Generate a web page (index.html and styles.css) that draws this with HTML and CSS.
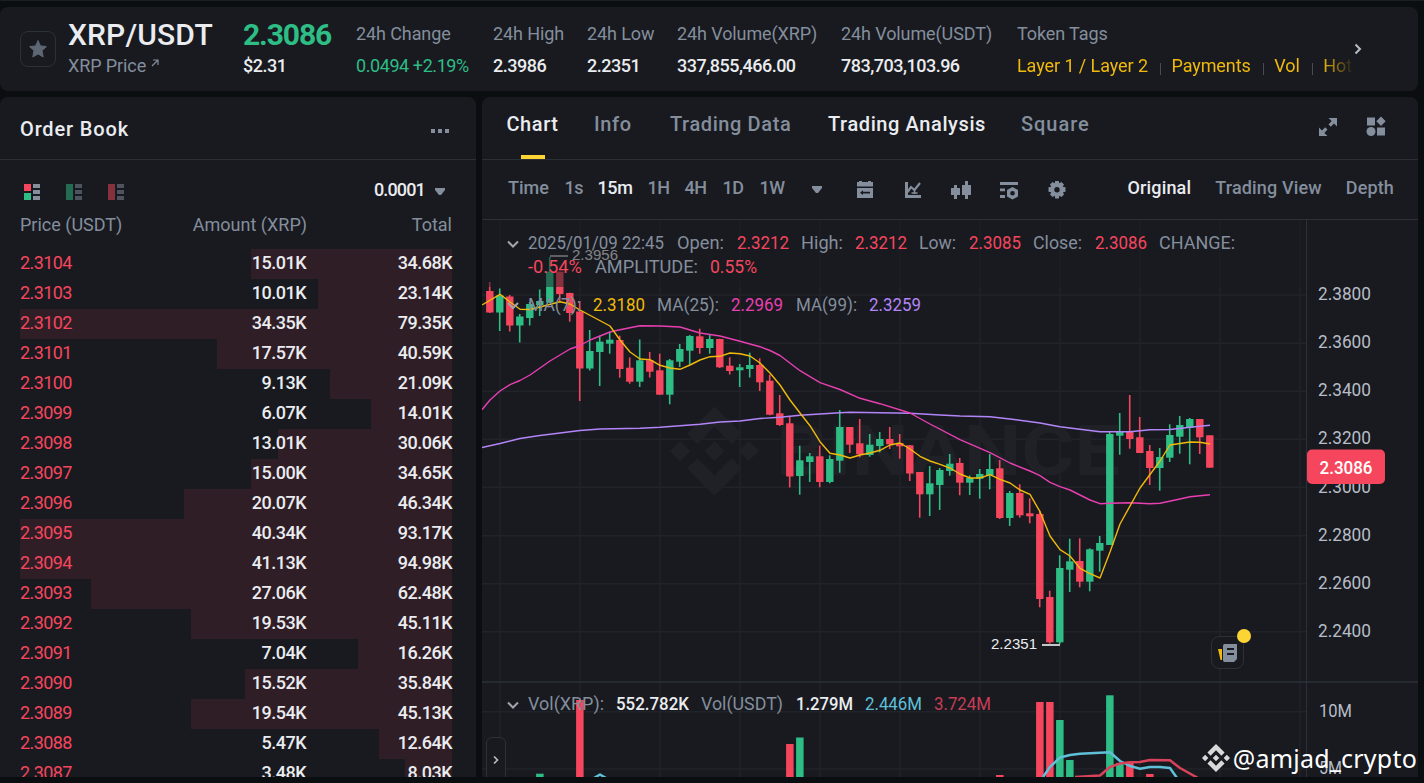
FILE: index.html
```html
<!DOCTYPE html>
<html lang="en">
<head>
  <meta charset="UTF-8" />
  <meta name="viewport" content="width=device-width, initial-scale=1.0"/>
  <title>2.3086 | XRPUSDT | Spot</title>
  <link rel="stylesheet" href="styles.css">
</head>
<body>

  <header class="ticker">
    <button class="fav">
      <svg width="20" height="20" viewBox="0 0 20 20"><path d="M10 1.5l2.4 5.4 6 .7-4.4 4 1.2 6.4-5.2-3.1L4.800 18 6 11.600 1.600 7.600l6-.7z" fill="#5e6673" stroke="#5e6673" stroke-linejoin="round"/></svg>
    </button>
    <div class="pair">
      <h1>XRP/USDT</h1>
      <a class="muted pair-link">XRP Price<svg width="8" height="8" viewBox="0 0 8 8"><path d="M1 7l6-6M2 1h5v5" fill="none" stroke="#848e9c" stroke-width="1.200"/></svg></a>
    </div>
    <div class="last">
      <div class="last-price">2.3086</div>
      <div class="value">$2.31</div>
    </div>
    <div class="stat stat-change"><div class="muted">24h Change</div><div class="value up">0.0494 +2.19%</div></div>
    <div class="stat stat-high"><div class="muted">24h High</div><div class="value">2.3986</div></div>
    <div class="stat stat-low"><div class="muted">24h Low</div><div class="value">2.2351</div></div>
    <div class="stat stat-base"><div class="muted">24h Volume(XRP)</div><div class="value">337,855,466.00</div></div>
    <div class="stat stat-quote"><div class="muted">24h Volume(USDT)</div><div class="value">783,703,103.96</div></div>
    <div class="stat stat-tags">
      <div class="muted">Token Tags</div>
      <div class="tags"><span>Layer 1 / Layer 2</span><span>Payments</span><span>Vol</span><span>Hot</span></div>
    </div>
    <svg class="more" width="8" height="12" viewBox="0 0 8 12"><path d="M1.500 1.500L6 6l-4.500 4.500" fill="none" stroke="#b7bdc6" stroke-width="2"/></svg>
  </header>

  <main>
    <section class="panel book">
      <div class="book-head">
        <h2>Order Book</h2>
        <div class="dots"><i></i><i></i><i></i></div>
      </div>
      <div class="book-tools">
        <svg width="16" height="16" viewBox="0 0 16 16"><path d="M0 0h7v7H0z" fill="#f6465d"/><path d="M0 9h7v7H0z" fill="#2ebd85"/><path d="M9 0h7v4H9zM9 6h7v4H9zM9 12h7v4H9z" fill="#848e9c"/></svg>
        <svg class="off" width="16" height="16" viewBox="0 0 16 16"><path d="M0 0h7v16H0z" fill="#2ebd85"/><path d="M9 0h7v4H9zM9 6h7v4H9zM9 12h7v4H9z" fill="#848e9c"/></svg>
        <svg class="off" width="16" height="16" viewBox="0 0 16 16"><path d="M0 0h7v16H0z" fill="#f6465d"/><path d="M9 0h7v4H9zM9 6h7v4H9zM9 12h7v4H9z" fill="#848e9c"/></svg>
        <div class="precision">0.0001</div>
        <svg class="caret" width="10" height="7" viewBox="0 0 10 7"><path d="M0 0h10v2L6 7H4L0 2z" fill="#848e9c"/></svg>
      </div>
      <div class="book-cols muted"><span>Price (USDT)</span><span>Amount (XRP)</span><span>Total</span></div>
      <div class="asks" id="asks"></div>
    </section>

    <section class="panel chart">
      <nav class="tabs">
        <a class="active tab-chart">Chart</a>
        <a class="tab-info">Info</a>
        <a class="tab-data">Trading Data</a>
        <a class="lit tab-analysis">Trading Analysis</a>
        <a class="tab-square">Square</a>
        <div class="tab-icons">
          <svg width="20" height="20" viewBox="0 0 20 20" fill="#848e9c"><path d="M10.500 1H19v8.500l-3-3-3.200 3.200-2.300-2.300L13.700 4zM9.500 19H1v-8.500l3 3 3.200-3.200 2.300 2.300L6.300 16z"/></svg>
          <svg width="20" height="20" viewBox="0 0 20 20" fill="#848e9c"><path d="M1 1.500h8v8H1zM11 11.500h8v8h-8zM15 .500l4.700 4.700L15 10l-4.700-4.800z"/><circle cx="5" cy="15.500" r="4.500"/></svg>
        </div>
      </nav>

      <div class="toolbar">
        <div class="intervals">
          <a class="iv-time">Time</a><a class="iv-1s">1s</a><a class="active iv-15">15m</a><a class="iv-1h">1H</a><a class="iv-4h">4H</a><a class="iv-1d">1D</a><a>1W</a>
        </div>
        <svg class="caret" width="10" height="7" viewBox="0 0 10 7"><path d="M0 0h10v2L6 7H4L0 2z" fill="#848e9c"/></svg>
        <div class="tools">
          <svg width="20" height="20" viewBox="0 0 20 20" fill="#848e9c"><path d="M2 2h2V1h3v1h6V1h3v1h2v4.500H2zM2 8h16v10H2zm3 4.700L8 15v-1.500h7v-1.700H8v-1.500z" fill-rule="evenodd"/></svg>
          <svg width="20" height="20" viewBox="0 0 20 20" fill="none" stroke="#848e9c"><path d="M3.500 2v14.500H18" stroke-width="3"/><path d="M4.500 12L8 7l3.500 3L17 3" stroke-width="2.200"/><path d="M8.500 13h6M11.500 9.500V14" stroke-width="1.500"/></svg>
          <svg width="20" height="20" viewBox="0 0 20 20" fill="#848e9c"><path d="M0 8h3V5h3v3h3v7H6v4H3v-4H0zM11 5h3V1h3v4h3v10h-3v4h-3v-4h-3z"/></svg>
          <svg width="20" height="20" viewBox="0 0 20 20" fill="#848e9c"><path d="M1 2h18v3H1zM1 8.500h5v2.700H1zM1 15h5v3H1zM13.500 7L19 10v6.500L13.500 19.500 8 16.500V10zm0 4a2.300 2.300 0 100 4.600 2.300 2.300 0 000-4.600z" fill-rule="evenodd"/></svg>
          <svg width="20" height="20" viewBox="0 0 20 20"><path d="M8.200 1h3.600l.5 2.300L14.500 2l2.500 2.500-1.300 2.200 2.800.5v4.600l-2.500.5L17 14.500l-2.500 2.500-2.200-1.300-.5 2.800H8.200l-.5-2.800-2.200 1.300L3 14.500l1.300-2.200L1.500 11.800V7.200l2.800-.5L3 4.500 5.500 2l2.200 1.300z" fill="#848e9c"/><circle cx="10" cy="9.700" r="2.700" fill="#181a20"/></svg>
        </div>
        <div class="views">
          <a class="active view-original">Original</a><a class="view-tv">Trading View</a><a class="view-depth">Depth</a>
        </div>
      </div>

      <div class="plot">
        <svg id="plot" width="936" height="557" viewBox="482 220 936 557"></svg>
        <button class="news">
          <svg width="20" height="18" viewBox="0 0 20 18"><path d="M0 5h4v11H2.500z" fill="#f0b90b"/><path d="M6.500 0H19v15l-3 3H6.500q-1.500 0-1.500-2V2q0-2 1.500-2z" fill="#848e9c"/><path d="M9 5h7M9 10h7" stroke="#181a20" stroke-width="2"/></svg>
          <i class="badge"></i>
        </button>
        <button class="expand">
          <svg width="6" height="8" viewBox="0 0 6 8"><path d="M1 .5L4.500 4 1 7.500" fill="none" stroke="#b7bdc6" stroke-width="1.600"/></svg>
        </button>
      </div>
    </section>
  </main>

  <div class="signature">
    <svg width="28" height="28" viewBox="0 0 126.610 126.610" fill="#d9d9d9"><path d="M38.730 53.200 63.310 28.620 87.900 53.210l14.300-14.300L63.310 0 24.430 38.900zM0 63.310 14.300 49.010 28.600 63.310 14.300 77.610zM38.730 73.410 63.310 98l24.590-24.590 14.310 14.290L63.310 126.610 24.430 87.720zM98 63.310l14.300-14.300 14.300 14.300-14.300 14.300zM77.830 63.300 63.310 48.780 48.790 63.300 63.310 77.830z"/></svg>
    <span>@amjad_crypto</span>
  </div>

  <script src="app.js"></script>
</body>
</html>
```

FILE: styles.css
```css
* { box-sizing: border-box; }
body {
  margin: 0;
  height: 783px;
  overflow: hidden;
  background: #0b0e11;
  border-top: 1px solid #1b1e23;
  color: #eaecef;
  font-family: Roboto, "Liberation Sans", sans-serif;
  font-size: 18px;
}
h1, h2 { margin: 0; font-weight: 500; }
button { background: none; border: 1px solid #2b3139; padding: 0; }
svg { display: block; flex: none; }
.muted { color: #848e9c; }
.up { color: #2ebd85; }

/* ticker */
.ticker {
  width: 1418px;
  height: 84px;
  margin-top: 6px;
  padding: 11px 0 0 20px;
  display: flex;
  background: #181a20;
  border-radius: 8px;
  line-height: 32px;
  white-space: nowrap;
}
.ticker > * { flex: none; }
.fav {
  width: 36px;
  height: 36px;
  margin: 13px 12px 0 0;
  border-radius: 8px;
  display: flex;
  align-items: center;
  justify-content: center;
}
.pair { width: 175px; }
.pair h1 { height: 32px; padding-top: 1px; font-size: 30px; letter-spacing: .15px; }
.pair-link { display: flex; gap: 5px; letter-spacing: -.1px; }
.pair-link svg { margin-top: 9px; }
.last { width: 113px; }
.last-price { height: 32px; padding-top: 1px; color: #2ebd85; font-size: 30px; font-weight: 700; letter-spacing: -1.1px; }
.value { font-weight: 500; letter-spacing: -.5px; }
.value.up { font-weight: 400; letter-spacing: -.42px; }
.stat .muted { letter-spacing: -.1px; }
.stat-change { width: 137px; }
.stat-high { width: 94px; }
.stat-low { width: 90px; }
.stat-base { width: 164px; }
.stat-quote { width: 176px; }
.stat-tags { width: 335px; }
.tags {
  display: flex;
  overflow: hidden;
  color: #f0b90b;
  letter-spacing: -.08px;
  -webkit-mask-image: linear-gradient(to right, #000 305px, transparent 337px);
  mask-image: linear-gradient(to right, #000 305px, transparent 337px);
}
.tags span + span { margin-left: 12px; display: flex; }
.tags span + span::before {
  content: "";
  width: 1px;
  height: 12px;
  margin: 13px 10.5px 0 0;
  background: #474d57;
}
.more { margin: 25px 0 0 2px; }

main { display: flex; gap: 6px; margin-top: 6px; }
.panel { height: 680px; overflow: hidden; background: #181a20; border-radius: 8px 8px 0 0; }

/* order book */
.book { width: 476px; }
.book-head {
  height: 63px;
  padding: 0 27px 0 20px;
  display: flex;
  align-items: center;
  justify-content: space-between;
  border-bottom: 1px solid #2b2f36;
}
.book-head h2 { margin-top: 2px; font-size: 20px; letter-spacing: .85px; }
.dots { display: flex; gap: 3px; margin-top: 5px; }
.dots i { width: 4px; height: 4px; background: #848e9c; }
.book-tools { height: 50px; padding: 14px 31px 0 24px; display: flex; gap: 26px; align-items: center; }
.book-tools .off { opacity: .5; }
.precision { margin: -5px -16px 0 auto; letter-spacing: -.85px; font-weight: 500; }
.book-tools .caret { margin-top: -2px; }
.book-cols { height: 39px; padding: 0 24px 0 20px; display: grid; grid-template-columns: 1fr 147px 145px; line-height: 29px; text-align: right; white-space: nowrap; }
.book-cols span:first-child { text-align: left; }
.ask {
  height: 30px;
  margin: 0 24px 0 20px;
  display: grid;
  grid-template-columns: 100px 186px 146px;
  line-height: 28px;
  text-align: right;
  font-weight: 500;
  letter-spacing: -.52px;
  background: linear-gradient(#301e27, #301e27) no-repeat right;
}
.ask span:first-child { text-align: left; color: #f6465d; font-weight: 400; letter-spacing: -.6px; }

/* chart panel */
.chart { width: 936px; }
.tabs {
  height: 63px;
  padding: 0 32px 0 24px;
  display: flex;
  gap: 36px;
  border-bottom: 1px solid #2b2f36;
  color: #848e9c;
  font-size: 20px;
  font-weight: 500;
  line-height: 54px;
  white-space: nowrap;
  letter-spacing: .6px;
}
.tabs .active { color: #eaecef; display: flex; flex-direction: column; align-items: center; }
.tabs .active::after { content: ""; width: 24px; height: 4px; margin-top: 4px; background: #fcd535; }
.tabs .lit { color: #eaecef; }
.tab-chart { width: 53px; margin-right: -1px; }
.tab-info { width: 40px; }
.tab-data { width: 122px; }
.tab-analysis { width: 157px; }
.tab-square { letter-spacing: .95px; }
.tab-icons { display: flex; gap: 28px; margin: 20px 0 0 auto; }
.tab-icons svg:last-child { margin-top: -1px; }
.toolbar {
  height: 60px;
  padding: 0 24px 0 26px;
  display: flex;
  align-items: center;
  border-bottom: 1px solid #2b3139;
  color: #848e9c;
  font-weight: 500;
  white-space: nowrap;
}
.intervals { display: flex; width: 304px; margin-top: -5px; letter-spacing: -.4px; }
.iv-time { width: 56.5px; letter-spacing: 0; }
.iv-1s { width: 33px; }
.iv-15 { width: 50px; }
.iv-1h { width: 37px; }
.iv-4h { width: 38px; }
.iv-1d { width: 37px; }
.toolbar .active { color: #eaecef; }
.tools { display: flex; gap: 28px; margin-left: 33px; }
.views { display: flex; gap: 24px; margin: -5px 0 0 auto; letter-spacing: .15px; }
.plot { position: relative; }
.news {
  position: absolute;
  left: 729px;
  top: 416px;
  width: 33px;
  height: 33px;
  border-radius: 8px;
  background: #181a20;
  display: flex;
  align-items: center;
  justify-content: center;
}
.badge { position: absolute; right: -8px; top: -8px; width: 14px; height: 14px; border-radius: 50%; background: #fcd535; }
.expand {
  position: absolute;
  left: 4px;
  top: 517px;
  width: 20px;
  height: 46px;
  border-radius: 6px;
  background: #181a20;
  display: flex;
  align-items: center;
  justify-content: center;
}

/* svg plot */
.t { font-size: 18px; fill: #848e9c; }
.t-red { fill: #f6465d; }
.t-yellow { fill: #f0b90b; }
.t-pink { fill: #e83fb1; }
.t-purple { fill: #b385f8; }
.t-white { fill: #eaecef; font-weight: 500; }
.t-cyan { fill: #5fc0d8; }
.t-crimson { fill: #c73d55; }
.t-axis { fill: #b7bdc6; }
.t-tag { fill: #fff; font-weight: 500; }
.t-mark { font: 15px "Liberation Sans", sans-serif; fill: #eaecef; }
.t-brand { font-size: 70px; font-weight: 700; fill: #1f2126; }

.signature {
  position: absolute;
  right: 7px;
  top: 739px;
  display: flex;
  align-items: center;
  gap: 3px;
  color: #fff;
  font: 25px/38px "Noto Sans", sans-serif;
  letter-spacing: .22px;
}
```

FILE: app.js
```js
// price, amount, total, depth bar width in px
const asks = [
  ["2.3104", "15.01K", "34.68K", 201], ["2.3103", "10.01K", "23.14K", 134],
  ["2.3102", "34.35K", "79.35K", 432], ["2.3101", "17.57K", "40.59K", 235],
  ["2.3100", "9.13K", "21.09K", 122], ["2.3099", "6.07K", "14.01K", 81],
  ["2.3098", "13.01K", "30.06K", 174], ["2.3097", "15.00K", "34.65K", 201],
  ["2.3096", "20.07K", "46.34K", 268], ["2.3095", "40.34K", "93.17K", 432],
  ["2.3094", "41.13K", "94.98K", 432], ["2.3093", "27.06K", "62.48K", 361],
  ["2.3092", "19.53K", "45.11K", 261], ["2.3091", "7.04K", "16.26K", 94],
  ["2.3090", "15.52K", "35.84K", 207], ["2.3089", "19.54K", "45.13K", 261],
  ["2.3088", "5.47K", "12.64K", 73], ["2.3087", "3.48K", "8.03K", 47]
];

document.getElementById("asks").innerHTML = asks.map(a =>
  `<div class="ask" style="background-size:${a[3]}px 100%"><span>${a[0]}</span><span>${a[1]}</span><span>${a[2]}</span></div>`
).join("");

const UP = "#2ebd85";
const DOWN = "#f6465d";

// direction, wick top, body top, body bottom, wick bottom (10px per candle)
const candles = [
  [0, 282, 291, 312.5, 313], [1, 288.5, 295.5, 312.5, 331], [0, 295, 296.5, 325.5, 331.5], [1, 314, 316.5, 325.5, 342.5],
  [1, 302, 304, 318, 325.5], [1, 289.5, 301, 305, 316], [1, 257, 271.7, 302.5, 303], [0, 271.7, 271.7, 294, 301],
  [0, 292.7, 293, 313, 321.7], [0, 301, 311.5, 368.5, 401], [1, 330, 351, 368.5, 370.5], [1, 335.7, 341.7, 352, 386],
  [1, 331.7, 339.7, 343.7, 353.7], [0, 335.7, 340, 369, 377.7], [0, 357.5, 367.7, 381.7, 383.7], [1, 339.5, 360.3, 381.7, 387],
  [0, 352, 360.3, 371.7, 377.5], [0, 353.7, 370.3, 394.7, 394.7], [1, 359, 360.3, 394.7, 404.3], [1, 344, 349, 361.7, 367],
  [1, 335, 336, 350.7, 364.7], [0, 328.7, 336.3, 348, 353.7], [1, 335, 339, 348, 353.7], [0, 338.7, 339, 367.3, 368],
  [0, 357.3, 365.7, 371, 374.5], [1, 364, 367.3, 370.3, 387], [1, 352.7, 365, 369, 377.5], [0, 358.3, 365, 382.3, 391],
  [0, 374.7, 380.7, 414.7, 415.3], [0, 395, 413.3, 425, 426], [0, 417, 423.3, 476.5, 487.5], [1, 445.7, 460.3, 476, 494.7],
  [1, 453, 456.3, 462, 482], [0, 445.7, 456.3, 482, 487.3], [1, 455.3, 459, 482, 483.3], [1, 410, 427, 460.7, 472.7],
  [0, 427, 427, 444.7, 453], [0, 419, 443.3, 454.3, 457.3], [1, 434, 444.7, 455, 456.7], [1, 432, 439, 446, 452.3],
  [0, 427, 439, 444.3, 449], [0, 434, 443, 446.3, 458.7], [0, 445, 445.3, 473.5, 481], [0, 472, 472, 494.3, 517.7],
  [1, 466, 483.3, 494.3, 516], [1, 468, 470, 485, 510], [1, 454, 463.7, 471, 475.7], [0, 458, 463, 482.7, 495.3],
  [1, 475.5, 478, 482.7, 495], [1, 469, 474, 478.7, 498.7], [1, 454, 469, 475.3, 489.3], [0, 460, 468.3, 518, 519],
  [1, 491, 493, 518, 526], [0, 484.3, 493, 515.3, 517.7], [0, 498.3, 513.3, 516.3, 523.3], [0, 510.7, 514, 599, 607.3],
  [0, 590.7, 597, 642.3, 643.7], [1, 555.3, 568, 642.3, 644], [1, 538.7, 561.3, 569.7, 592], [0, 538.3, 561, 581.7, 587.3],
  [1, 548.3, 549.3, 581.7, 591.3], [1, 536, 543, 550.7, 571.7], [1, 432, 434, 545, 545], [1, 413, 431.7, 435.7, 454.7],
  [0, 395, 431.7, 439, 448.7], [0, 417, 437.3, 453, 453], [0, 445, 451, 468, 485], [1, 448, 457, 468, 490.7],
  [1, 424.3, 435, 457.7, 462], [1, 416, 425, 436.7, 453.7], [1, 418, 419, 427.7, 464.3], [0, 419, 419, 437.3, 454],
  [0, 435.3, 435.3, 467.7, 467.7]
];

const ma7 = "482,305 500,294.3 510,302 520,309.3 530,309.5 540,307 560,301.700 570,304 580,310 610,326 620,340 630,352 640,359 650,359.700 660,365.300 670,368 680,369.300 690,365 700,360 710,356.700 720,356.300 730,353 740,353.700 750,356 760,363 770,373 780,385 790,400 800,413 810,425.700 820,441.700 830,453.300 840,455 850,458 860,455 870,453 880,450.300 890,445 900,443 910,449 920,456.300 930,461 940,464.300 950,468 960,474 970,478 980,478 990,474.700 1000,479.300 1010,483 1020,490 1030,494.300 1040,511.700 1050,536 1060,549.700 1070,556 1080,568.300 1090,573.700 1100,578 1110,552 1120,524 1140,488 1160,461 1170,445 1180,443.500 1190,442 1200,442.300 1210,444";
const ma25 = "482,409.700 490,400 500,391 510,384.700 520,380.500 530,375 550,361 570,349 580,345.500 590,340 600,336 610,332 620,329.700 640,325.700 660,326 680,327 700,333 720,336 740,341.300 760,346.700 770,350.500 780,355.500 800,370.700 820,382.700 840,389.500 860,398.300 880,403.700 910,413 930,424 960,439.700 990,452.700 1010,463 1030,471 1040,475.700 1050,482.300 1060,486.700 1070,490 1080,495 1090,500 1100,503.700 1110,503.300 1130,502.700 1150,503.700 1160,503.300 1180,499 1190,496.700 1210,494.700";
const ma99 = "482,447.500 500,443.500 520,438.500 540,435.500 560,433 580,430.500 600,429 640,428.300 660,427.300 680,425.800 700,424.300 720,422 740,421 760,418.500 780,417.300 800,415.300 840,412.700 850,412.200 910,413.300 940,415 960,416 990,416.700 1010,419 1040,423 1060,426.700 1100,431.700 1130,431.700 1150,429.700 1170,429.500 1190,427.300 1210,425.300";

// volume bars: center, top, direction
const volumes = [
  [540, 773.7, 1], [580, 700, 0], [790, 744, 0], [800, 737.5, 1], [1000, 775, 0], [1040, 702, 0], [1050, 702, 0],
  [1060, 720, 1], [1070, 760, 1], [1110, 695.3, 1], [1120, 763, 1], [1130, 762.7, 0], [1150, 774, 0]
];

// x, baseline, width, text, class
const labels = [
  [528, 249, 136, "2025/01/09 22:45", ""], [677, 249, 47, "Open:", ""], [737, 249, 52, "2.3212", "t-red"],
  [801, 249, 42, "High:", ""], [855, 249, 52, "2.3212", "t-red"], [919, 249, 37, "Low:", ""], [969, 249, 52, "2.3085", "t-red"],
  [1033, 249, 49, "Close:", ""], [1095, 249, 52, "2.3086", "t-red"], [1159, 249, 76, "CHANGE:", ""],
  [528, 273, 54, "-0.54%", "t-red"], [595, 273, 103, "AMPLITUDE:", ""], [710, 273, 47, "0.55%", "t-red"],
  [528, 311, 53, "MA(7):", ""], [593, 311, 52, "2.3180", "t-yellow"], [657, 311, 62, "MA(25):", ""], [731, 311, 52, "2.2969", "t-pink"],
  [796, 311, 61, "MA(99):", ""], [869, 311, 52, "2.3259", "t-purple"],
  [528, 710, 76, "Vol(XRP):", ""], [616, 710, 73, "552.782K", "t-white"], [701, 710, 82, "Vol(USDT)", ""],
  [796, 710, 57, "1.279M", "t-white"], [865, 710, 57, "2.446M", "t-cyan"], [934, 710, 57, "3.724M", "t-crimson"],
  [1318, 300, 53, "2.3800", "t-axis"], [1318, 348, 53, "2.3600", "t-axis"], [1318, 396, 53, "2.3400", "t-axis"],
  [1318, 444, 53, "2.3200", "t-axis"], [1318, 493, 53, "2.3000", "t-axis"], [1318, 541, 53, "2.2800", "t-axis"],
  [1318, 589, 53, "2.2600", "t-axis"], [1318, 637, 53, "2.2400", "t-axis"],
  [1319, 717, 33, "10M", "t-axis"], [1319, 774, 23, "5M", "t-axis"]
];

const label = ([x, y, w, text, cls]) =>
  `<text class="t ${cls}" x="${x}" y="${y}" textLength="${w}" lengthAdjust="spacingAndGlyphs">${text}</text>`;
const line = (pts, color, w) =>
  `<polyline points="${pts}" fill="none" stroke="${color}" stroke-width="${w}" stroke-linejoin="round"/>`;
const chevron = (x, y) =>
  `<path d="M${x - 5} ${y - 2.5}l5 5 5-5" fill="none" stroke="#a0a5ae" stroke-width="2"/>`;

let svg = "";

for (let x = 500; x <= 1300; x += 80) svg += `<path d="M${x} 220V777" stroke="#202329" stroke-width="1.500"/>`;
[295, 343.2, 391.2, 439.3, 487.3, 535.7, 583.7, 631.8, 711.7, 769].forEach(y => {
  svg += `<path d="M482 ${y}H1306" stroke="#202329" stroke-width="1.500"/>`;
});

svg += `<path transform="translate(670 406.500) scale(.703)" fill="#1f2126" d="M38.730 53.200 63.310 28.620 87.900 53.210l14.300-14.300L63.310 0 24.430 38.900zM0 63.310 14.300 49.010 28.600 63.310 14.300 77.610zM38.730 73.410 63.310 98l24.590-24.590 14.310 14.290L63.310 126.610 24.430 87.720zM98 63.310l14.300-14.300 14.300 14.300-14.300 14.300zM77.830 63.300 63.310 48.780 48.790 63.300 63.310 77.830z"/>`;
svg += label([776, 475, 344, "BINANCE", "t-brand"]);

volumes.forEach(([x, y, up]) => {
  svg += `<rect x="${x - 3.9}" y="${y}" width="7.500" height="${777 - y}" fill="${up ? UP : DOWN}"/>`;
});
svg += line("594,778 600,774.500 606,778", "#5fc0d8", 2.5);
svg += line("1043,777 1050,767 1060,757.500 1070,755 1080,753.700 1100,752.700 1110,752.300 1120,761 1130,766 1140,768.700 1150,767 1160,767 1170,768 1177,778", "#5fc0d8", 2.5);
svg += line("1075,777 1100,775.500 1110,767 1120,763.500 1130,762.300 1140,762 1150,760 1170,760.300 1180,768 1198,778", "#d9425b", 2.5);

candles.forEach(([up, wt, bt, bb, wb], i) => {
  const x = 489.7 + i * 10;
  const c = up ? UP : DOWN;
  svg += `<path d="M${x} ${wt}V${wb}" stroke="${c}" stroke-width="1.600"/>`;
  svg += `<rect x="${x - 3.6}" y="${bt}" width="7.400" height="${bb - bt}" fill="${c}"/>`;
});

svg += line(ma99, "#b385f8", 1.4) + line(ma25, "#e83fb1", 1.4) + line(ma7, "#f0b90b", 1.4);

svg += `<path d="M550 256H568" stroke="#d0d3d8" stroke-width="1.500"/>` + label([572, 260, 46, "2.3956", "t-mark"]);
svg += `<path d="M1042 645H1060" stroke="#fff" stroke-width="1.500"/>` + label([991, 649, 46, "2.2351", "t-mark"]);

// legend backdrop
svg += `<rect x="482" y="220" width="824" height="67" fill="#181a20" opacity=".5"/>`;
svg += `<path d="M482 682H1418" stroke="#252b31" stroke-width="2"/><path d="M1306.500 220V777" stroke="#2b3139"/>`;
svg += chevron(513, 244) + chevron(513, 305.5) + chevron(513, 705);
svg += labels.map(label).join("");
svg += `<rect x="1307" y="449.500" width="78" height="34.500" rx="5" fill="${DOWN}"/>` + label([1319.5, 474, 53, "2.3086", "t-tag"]);

document.getElementById("plot").innerHTML = svg;
```
